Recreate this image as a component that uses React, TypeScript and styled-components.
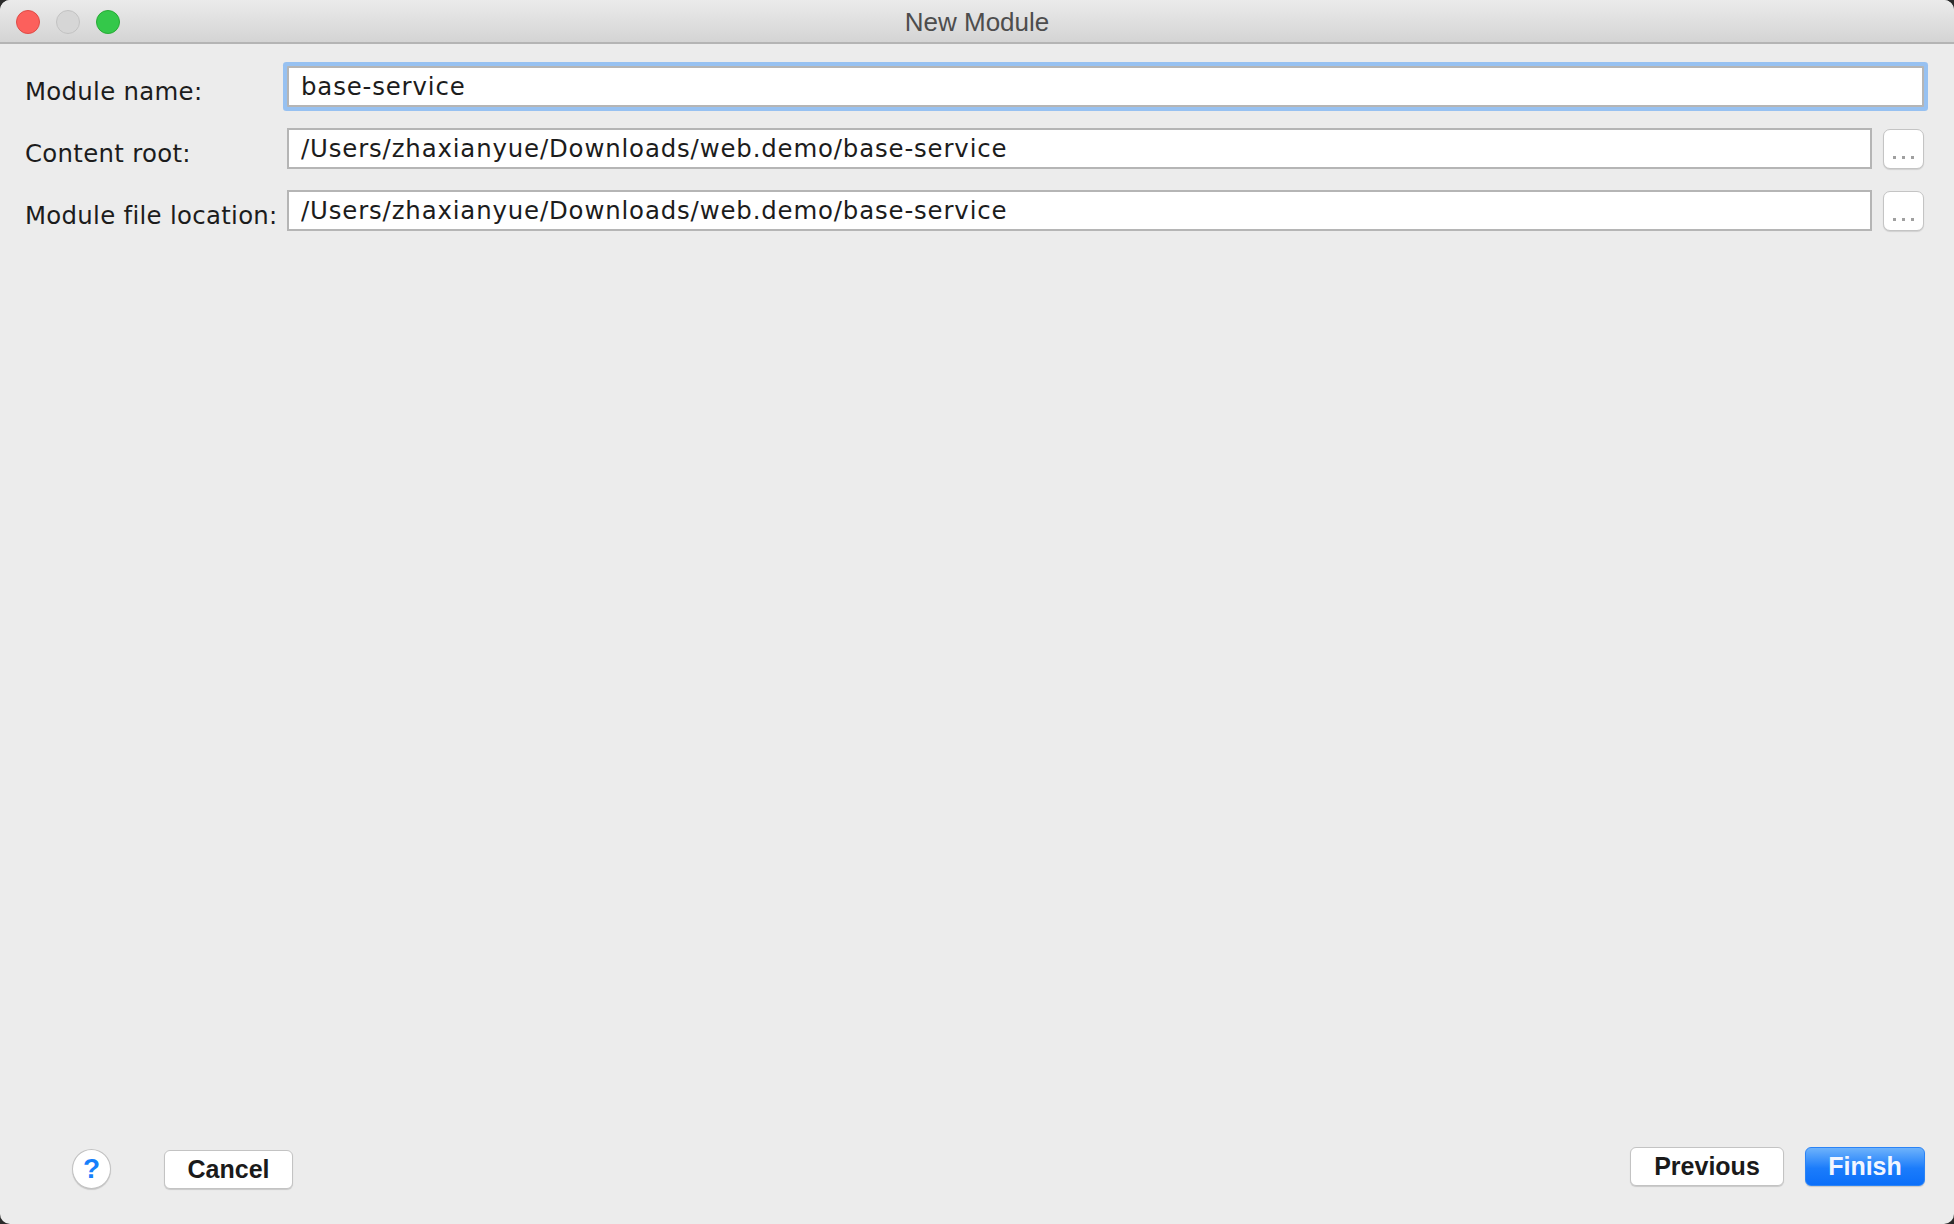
import React from "react";
import styled, { createGlobalStyle } from "styled-components";

const Global = createGlobalStyle`
  html, body { margin: 0; padding: 0; background: #2b2b2b; }
  body { width: 1954px; height: 1224px; overflow: hidden; }
  * { box-sizing: border-box; }
`;

const Window = styled.div`
  width: 1954px;
  height: 1224px;
  background: #ececec;
  border-radius: 10px;
  overflow: hidden;
  display: flex;
  flex-direction: column;
`;

const TitleBar = styled.div`
  height: 44px;
  flex: none;
  position: relative;
  display: flex;
  align-items: center;
  justify-content: center;
  background: linear-gradient(#ebebeb, #d4d4d4);
  border-bottom: 2px solid #b4b4b4;
`;

const Lights = styled.div`
  position: absolute;
  left: 16px;
  top: 10px;
  display: flex;
  gap: 16px;
`;

const Light = styled.span<{ $fill: string; $ring: string }>`
  width: 24px;
  height: 24px;
  border-radius: 50%;
  background: ${(p) => p.$fill};
  border: 1px solid ${(p) => p.$ring};
`;

const Title = styled.div`
  font-family: "Liberation Sans", Arial, sans-serif;
  font-size: 26px;
  color: #4d4d4d;
  margin-top: 2px;
`;

const Form = styled.div`
  display: grid;
  grid-template-columns: 262px 1fr;
  row-gap: 21px;
  padding: 22px 30px 0 25px;
  align-items: center;
`;

const Label = styled.label`
  font-family: "DejaVu Sans", Verdana, sans-serif;
  font-size: 24.4px;
  letter-spacing: 0.3px;
  color: #1c1c1c;
  padding-top: 9px;
  white-space: nowrap;
`;

const FieldRow = styled.div`
  display: flex;
  align-items: center;
  gap: 11px;
`;

const Field = styled.input<{ $focused?: boolean }>`
  flex: 1;
  min-width: 0;
  height: 41px;
  border: 2px solid #b5b5b5;
  border-radius: ${(p) => (p.$focused ? "1px" : "0")};
  background: #ffffff;
  padding: 0 0 0 12px;
  font-family: "DejaVu Sans", Verdana, sans-serif;
  font-size: 24.4px;
  letter-spacing: 0.85px;
  color: #1c1c1c;
  outline: none;
  box-shadow: ${(p) => (p.$focused ? "0 0 0 4px #97c1f1" : "none")};
`;

const BrowseButton = styled.button`
  width: 41px;
  height: 40px;
  flex: none;
  border: 1px solid #c4c4c4;
  border-radius: 7px;
  background: #ffffff;
  box-shadow: 0 1px 1px rgba(0, 0, 0, 0.12);
  padding: 0;
  display: flex;
  align-items: flex-end;
  justify-content: center;
  padding-bottom: 9px;
`;

const Spacer = styled.div`
  flex: 1;
`;

const Footer = styled.div`
  display: flex;
  align-items: center;
  justify-content: space-between;
  padding: 0 29px 35px 72px;
`;

const Group = styled.div<{ $gap: number; $shift?: number }>`
  display: flex;
  align-items: center;
  gap: ${(p) => p.$gap}px;
  margin-top: ${(p) => p.$shift ?? 0}px;
`;

const HelpButton = styled.button`
  width: 39px;
  height: 40px;
  border-radius: 50%;
  border: 1px solid #c2c2c2;
  background: #ffffff;
  box-shadow: 0 1px 1px rgba(0, 0, 0, 0.15);
  color: #1680fb;
  font-family: "Liberation Sans", Arial, sans-serif;
  font-weight: 700;
  font-size: 28px;
  padding: 0;
  display: flex;
  align-items: center;
  justify-content: center;
  line-height: 1;
`;

const PushButton = styled.button<{ $primary?: boolean; $w: number }>`
  width: ${(p) => p.$w}px;
  height: 39px;
  border-radius: 6px;
  font-family: "Liberation Sans", Arial, sans-serif;
  font-weight: 700;
  font-size: 25px;
  padding: 0;
  display: flex;
  align-items: center;
  justify-content: center;
  border: 1px solid ${(p) => (p.$primary ? "#2a83f6" : "#c3c3c3")};
  background: ${(p) =>
    p.$primary ? "linear-gradient(#6db2fb, #1b7cfb 55%, #0b6ff9)" : "#ffffff"};
  color: ${(p) => (p.$primary ? "#f2f6ff" : "#1a1a1a")};
  box-shadow: 0 1px 1px rgba(0, 0, 0, 0.15);
`;

const Dots = () => (
  <svg width="21" height="3" viewBox="0 0 21 3">
    <rect x="0" y="0" width="3" height="3" fill="#a0a0a0" />
    <rect x="9" y="0" width="3" height="3" fill="#a0a0a0" />
    <rect x="18" y="0" width="3" height="3" fill="#a0a0a0" />
  </svg>
);

const PATH = "/Users/zhaxianyue/Downloads/web.demo/base-service";

export default function App() {
  return (
    <>
      <Global />
      <Window>
        <TitleBar>
          <Lights>
            <Light $fill="#fc605c" $ring="#de4b46" />
            <Light $fill="#d6d6d6" $ring="#c2c2c2" />
            <Light $fill="#34c84a" $ring="#27aa35" />
          </Lights>
          <Title>New Module</Title>
        </TitleBar>
        <Form>
          <Label>Module name:</Label>
          <FieldRow>
            <Field $focused defaultValue="base-service" />
          </FieldRow>
          <Label>Content root:</Label>
          <FieldRow>
            <Field defaultValue={PATH} />
            <BrowseButton>
              <Dots />
            </BrowseButton>
          </FieldRow>
          <Label>Module file location:</Label>
          <FieldRow>
            <Field defaultValue={PATH} />
            <BrowseButton>
              <Dots />
            </BrowseButton>
          </FieldRow>
        </Form>
        <Spacer />
        <Footer>
          <Group $gap={53} $shift={5}>
            <HelpButton>?</HelpButton>
            <PushButton $w={129}>Cancel</PushButton>
          </Group>
          <Group $gap={21}>
            <PushButton $w={154}>Previous</PushButton>
            <PushButton $primary $w={120}>
              Finish
            </PushButton>
          </Group>
        </Footer>
      </Window>
    </>
  );
}
